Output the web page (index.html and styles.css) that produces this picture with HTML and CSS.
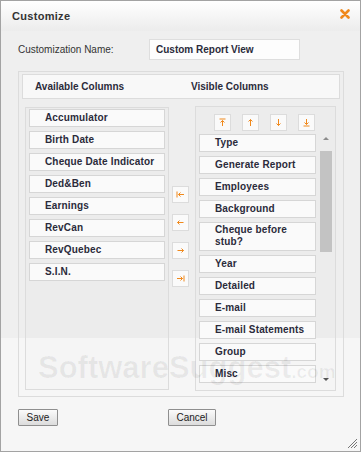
FILE: index.html
```html
<!DOCTYPE html>
<html>
<head>
<meta charset="utf-8">
<link rel="stylesheet" href="styles.css">
</head>
<body>
<div class="dialog">
  <div class="titlebar">
    <span class="title">Customize</span>
    <svg class="close" width="10" height="10" viewBox="0 0 10 10"><path d="M1.5 1.5 L8.5 8.5 M8.5 1.5 L1.5 8.5" stroke="#f0891c" stroke-width="2.6" stroke-linecap="round"/></svg>
  </div>
  <div class="content">
    <div class="name-row">
      <span class="label">Customization Name:</span>
      <div class="input">Custom Report View</div>
    </div>
    <div class="panel">
      <div class="panel-head">
        <span class="h-avail">Available Columns</span>
        <span class="h-vis">Visible Columns</span>
      </div>
      <div class="panel-body">
        <div class="list-box left">
          <div class="item">Accumulator</div>
          <div class="item">Birth Date</div>
          <div class="item">Cheque Date Indicator</div>
          <div class="item">Ded&amp;Ben</div>
          <div class="item">Earnings</div>
          <div class="item">RevCan</div>
          <div class="item">RevQuebec</div>
          <div class="item">S.I.N.</div>
        </div>
        <div class="mid">
          <div class="ibtn"><svg width="9" height="9" viewBox="0 0 9 9"><path d="M1 1.5V7.5 M8 4.5H2.5 M4.5 2.5L2.5 4.5L4.5 6.5" stroke="#f0891c" stroke-width="1" fill="none"/></svg></div>
          <div class="ibtn"><svg width="9" height="9" viewBox="0 0 9 9"><path d="M7.5 4.5H1.5 M3.5 2.5L1.5 4.5L3.5 6.5" stroke="#f0891c" stroke-width="1" fill="none"/></svg></div>
          <div class="ibtn"><svg width="9" height="9" viewBox="0 0 9 9"><path d="M1.5 4.5H7.5 M5.5 2.5L7.5 4.5L5.5 6.5" stroke="#f0891c" stroke-width="1" fill="none"/></svg></div>
          <div class="ibtn"><svg width="9" height="9" viewBox="0 0 9 9"><path d="M8 1.5V7.5 M1 4.5H6.5 M4.5 2.5L6.5 4.5L4.5 6.5" stroke="#f0891c" stroke-width="1" fill="none"/></svg></div>
        </div>
        <div class="list-box right">
          <div class="top-btns">
            <div class="ibtn"><svg width="9" height="9" viewBox="0 0 9 9"><path d="M1.5 1H7.5 M4.5 8V2.5 M2.5 4.5L4.5 2.5L6.5 4.5" stroke="#f0891c" stroke-width="1" fill="none"/></svg></div>
            <div class="ibtn"><svg width="9" height="9" viewBox="0 0 9 9"><path d="M4.5 8V1.5 M2.5 3.5L4.5 1.5L6.5 3.5" stroke="#f0891c" stroke-width="1" fill="none"/></svg></div>
            <div class="ibtn"><svg width="9" height="9" viewBox="0 0 9 9"><path d="M4.5 1V7.5 M2.5 5.5L4.5 7.5L6.5 5.5" stroke="#f0891c" stroke-width="1" fill="none"/></svg></div>
            <div class="ibtn"><svg width="9" height="9" viewBox="0 0 9 9"><path d="M1.5 8H7.5 M4.5 1V6.5 M2.5 4.5L4.5 6.5L6.5 4.5" stroke="#f0891c" stroke-width="1" fill="none"/></svg></div>
          </div>
          <div class="vis-area">
            <div class="vis-list">
              <div class="item">Type</div>
              <div class="item">Generate Report</div>
              <div class="item">Employees</div>
              <div class="item">Background</div>
              <div class="item two">Cheque before stub?</div>
              <div class="item">Year</div>
              <div class="item">Detailed</div>
              <div class="item">E-mail</div>
              <div class="item">E-mail Statements</div>
              <div class="item">Group</div>
              <div class="item">Misc</div>
            </div>
            <div class="scrollbar">
              <svg class="arr" width="12" height="8" viewBox="0 0 12 8"><path d="M3 6H9L6 3Z" fill="#8c8c8c"/></svg>
              <div class="track"><div class="thumb"></div></div>
              <svg class="arr" width="12" height="8" viewBox="0 0 12 8"><path d="M3 2H9L6 5Z" fill="#555"/></svg>
            </div>
          </div>
        </div>
      </div>
    </div>
    <div class="footer">
      <button class="btn save">Save</button>
      <button class="btn cancel">Cancel</button>
    </div>
  </div>
  <div class="watermark">SoftwareSuggest<span class="com">.com</span></div>
  <svg class="grip" width="12" height="12" viewBox="0 0 12 12"><path d="M11 2L2 11 M11 5L5 11 M11 8L8 11" stroke="#777" stroke-width="1"/></svg>
</div>
</body>
</html>
```
FILE: styles.css
```css
html, body {
  margin: 0;
  padding: 0;
  background: #ffffff;
}
body {
  font-family: "Liberation Sans", Arial, sans-serif;
  color: #333;
}
.dialog {
  position: relative;
  width: 359px;
  height: 450px;
  border: 1px solid #a3a3a3;
  background: linear-gradient(#efefef 0, #efefef 337px, #f6f6f6 337px);
  overflow: hidden;
}
.titlebar {
  height: 29px;
  display: flex;
  align-items: center;
  justify-content: space-between;
  padding: 0 11px 1px 11px;
  background: linear-gradient(#ffffff, #ececec);
}
.title {
  font-size: 11px;
  font-weight: bold;
  letter-spacing: 0.3px;
  color: #333;
}
.close {
  margin-top: -4px;
  margin-right: -1px;
}
.content {
  padding: 0 0 0 17px;
}
.name-row {
  display: flex;
  align-items: center;
  margin-top: 8px;
  height: 21px;
}
.label {
  font-size: 10px;
  color: #333;
  width: 131px;
}
.input {
  width: 143px;
  height: 19px;
  line-height: 19px;
  padding-left: 6px;
  background: #fdfdfd;
  border: 1px solid #dedede;
  font-size: 10px;
  font-weight: bold;
  color: #2b2b3b;
}
.panel {
  margin-top: 11px;
  width: 318px;
  height: 319px;
  border: 1px solid #dcdcdc;
  padding: 2px 3px 3px 3px;
  background: linear-gradient(#eeeeee 0, #eeeeee 266px, #f6f6f6 266px);
}
.panel-head {
  height: 23px;
  border: 1px solid #dcdcdc;
  background: #f8f8f8;
  display: flex;
  align-items: center;
  font-size: 10px;
  font-weight: bold;
  color: #2b2b3b;
}
.h-avail {
  margin-left: 12px;
  width: 156px;
}
.panel-body {
  display: flex;
  margin-top: 8px;
  margin-left: 3px;
}
.list-box {
  border: 1px solid #dcdcdc;
  box-sizing: border-box;
}
.left {
  width: 144px;
  height: 283px;
  padding: 1px 3px;
  display: flex;
  flex-direction: column;
  gap: 4px;
  background: linear-gradient(#ececec 0, #ececec 230px, #f5f5f5 230px);
}
.item {
  height: 16px;
  line-height: 16px;
  border: 1px solid #d6d6d6;
  background: #fafafa;
  padding-left: 15px;
  font-size: 10px;
  font-weight: bold;
  letter-spacing: 0.15px;
  color: #2b2b3b;
  flex-shrink: 0;
  box-sizing: content-box;
}
.mid {
  width: 17px;
  margin-left: 3px;
  padding-top: 79px;
  display: flex;
  flex-direction: column;
  gap: 11px;
}
.ibtn {
  width: 15px;
  height: 15px;
  border: 1px solid #dcdcdc;
  background: #fafafa;
  display: flex;
  align-items: center;
  justify-content: center;
}
.right {
  margin-left: 6px;
  margin-top: -1px;
  width: 141px;
  height: 285px;
  padding: 0 3px;
  background: linear-gradient(#ececec 0, #ececec 231px, #f5f5f5 231px);
}
.top-btns {
  display: flex;
  gap: 11px;
  margin-top: 7px;
  margin-left: 15px;
  height: 17px;
}
.vis-area {
  display: flex;
  margin-top: 3px;
  height: 253px;
}
.vis-list {
  width: 117px;
  overflow: hidden;
  display: flex;
  flex-direction: column;
  gap: 4px;
}
.vis-list .item {
  width: 100px;
}
.vis-list .two {
  height: 26px;
  line-height: 12px;
  padding-top: 1px;
  white-space: normal;
}
.scrollbar {
  margin-left: 4px;
  width: 12px;
  display: flex;
  flex-direction: column;
  height: 250px;
}
.arr {
  flex-shrink: 0;
}
.track {
  flex: 1;
  padding-top: 9px;
}
.thumb {
  height: 101px;
  background: #c3c3c3;
}
.footer {
  display: flex;
  margin-top: 12px;
  gap: 110px;
}
.btn {
  height: 17px;
  padding: 0 7px;
  border: 1px solid #8f8f8f;
  border-radius: 1px;
  background: linear-gradient(#fbfbfb, #dcdcdc);
  font-family: "Liberation Sans", Arial, sans-serif;
  font-size: 10px;
  color: #222;
  line-height: 14px;
}
.save {
  width: 40px;
}
.cancel {
  width: 48px;
}
.watermark {
  position: absolute;
  left: 37px;
  top: 348px;
  font-size: 31px;
  font-weight: bold;
  color: rgba(0, 0, 0, 0.06);
  white-space: nowrap;
  line-height: 38px;
  pointer-events: none;
}
.com {
  font-size: 19px;
}
.grip {
  position: absolute;
  right: 2px;
  bottom: 2px;
}
```
